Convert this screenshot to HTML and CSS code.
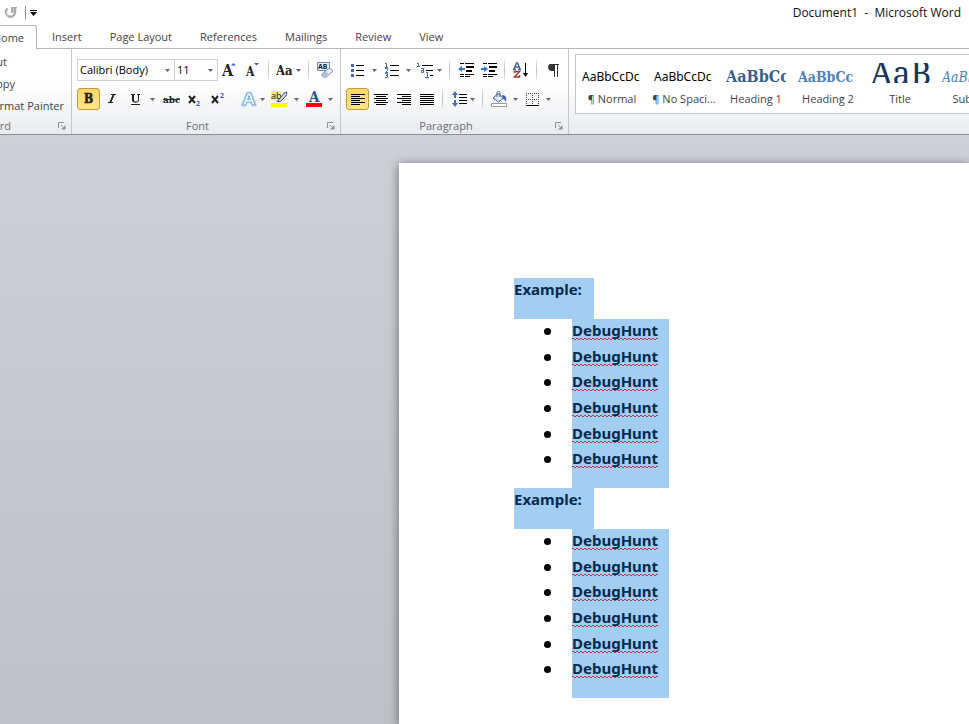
FILE: index.html
```html
<!DOCTYPE html>
<html lang="en">
<head>
    <meta charset="UTF-8">
    <meta name="viewport" content="width=device-width, initial-scale=1.0">
    <title>Document1 - Microsoft Word</title>
    <link rel="stylesheet" href="styles.css">
</head>
<body>
    <header class="titlebar">
        <div class="quick-access">
            <button type="button" class="quick" aria-label="Repeat">
                <svg width="14" height="14" viewBox="0 0 14 14"><path d="M3.500 2.500A4.600 4.600 0 1 0 11 6V2" fill="none" stroke="#a9abae" stroke-width="2.400"/><path d="M7 1h6v1.500H9.500V7H7z" fill="#a9abae"/><path d="M3 5a4 4 0 0 0 1 5" fill="none" stroke="#d6d8da"/></svg>
            </button>
            <span class="quick-sep"></span>
            <button type="button" class="quick" aria-label="Customize">
                <svg width="7" height="6" viewBox="0 0 7 6"><path d="M0 0h7v1H0zM0 2h7L3.500 6z" fill="#000"/></svg>
            </button>
        </div>
        <h1 class="title">Document1&nbsp; -&nbsp; Microsoft Word</h1>
    </header>

    <nav class="tabs">
        <button type="button" class="tab active">Home</button>
        <button type="button" class="tab">Insert</button>
        <button type="button" class="tab">Page Layout</button>
        <button type="button" class="tab">References</button>
        <button type="button" class="tab">Mailings</button>
        <button type="button" class="tab">Review</button>
        <button type="button" class="tab">View</button>
    </nav>

    <section class="ribbon">
        <div class="group clipboard">
            <div class="commands">
                <button type="button" class="command">Cut</button>
                <button type="button" class="command">Copy</button>
                <button type="button" class="command">Format Painter</button>
            </div>
            <div class="group-footer">
                <span class="group-name">Clipboard</span>
                <button type="button" class="launcher" aria-label="Clipboard options"><svg width="8" height="8" viewBox="0 0 8 8"><path d="M.5 6V.5H6M3 3l2 2" fill="none" stroke="#8d9197"/><path d="M7.500 3v4.500H3z" fill="#8d9197"/></svg></button>
            </div>
        </div>

        <div class="group font">
            <div class="tools">
                <label class="combo combo-font">
                    <select aria-label="Font"><option>Calibri (Body)</option></select>
                    <svg class="arrow" width="5" height="3" viewBox="0 0 5 3"><path d="M0 0h5L2.500 3z"/></svg>
                </label>
                <label class="combo combo-size">
                    <select aria-label="Font size"><option>11</option></select>
                    <svg class="arrow" width="5" height="3" viewBox="0 0 5 3"><path d="M0 0h5L2.500 3z"/></svg>
                </label>
                <button type="button" class="tool" aria-label="Grow font">
                    <svg width="15" height="16" viewBox="0 0 15 16"><text class="serif" x="0" y="14" font-size="16">A</text><path d="M9 3.500h5L11.500 1z" fill="#3b62ab"/></svg>
                </button>
                <button type="button" class="tool" aria-label="Shrink font">
                    <svg width="15" height="16" viewBox="0 0 15 16"><text class="serif" x="1" y="14" font-size="12">A</text><path d="M9 1h5l-2.500 2.500z" fill="#3b62ab"/></svg>
                </button>
                <span class="sep"></span>
                <button type="button" class="tool split" aria-label="Change case">
                    <svg width="17" height="16" viewBox="0 0 17 16"><text class="serif" x="0" y="13" font-size="13">Aa</text></svg>
                    <svg class="arrow" width="5" height="3" viewBox="0 0 5 3"><path d="M0 0h5L2.500 3z"/></svg>
                </button>
                <span class="sep"></span>
                <button type="button" class="tool" aria-label="Clear formatting">
                    <svg width="16" height="16" viewBox="0 0 16 16"><path d="M.5.5h12v8H.5z" fill="#e9eef8" stroke="#7089b8"/><text x="1" y="7" font-size="7" font-weight="bold">AB</text><path d="M5 12l6-5c2-1 5 0 4.500 2.500L10 14.500c-2 2-6 0-5-2.500z" fill="#eef1f7" stroke="#7485a8"/><path d="M8 9.500c2 0 3 1.500 3.500 3.500L10 14.500c-2 1.500-5.500 0-5-2.500z" fill="#b5c1da"/></svg>
                </button>
            </div>
            <div class="tools">
                <button type="button" class="tool on" aria-label="Bold"><svg width="15" height="16" viewBox="0 0 15 16"><text class="serif" x="3" y="12" font-size="12" stroke="#222" stroke-width=".5">B</text></svg></button>
                <button type="button" class="tool" aria-label="Italic"><svg width="15" height="16" viewBox="0 0 15 16"><path d="M7 3h5v1h-1.500L7.500 11H9v1H4v-1h1.500L8.500 4H7z" fill="#222"/></svg></button>
                <button type="button" class="tool split underline" aria-label="Underline">
                    <svg width="13" height="16" viewBox="0 0 13 16"><path d="M2 3h4v1H5v5c0 2 4 2 4 0V4H8V3h3v1h-1v5c0 3.500-7 3.500-7 0V4H2zM2 13h9v1H2z" fill="#222"/></svg>
                    <svg class="arrow" width="5" height="3" viewBox="0 0 5 3"><path d="M0 0h5L2.500 3z"/></svg>
                </button>
                <button type="button" class="tool" aria-label="Strikethrough"><svg width="17" height="16" viewBox="0 0 17 16"><text class="serif" x="0" y="12" font-size="10">abc</text><path d="M0 8h17v1H0z" fill="#333"/></svg></button>
                <button type="button" class="tool" aria-label="Subscript"><svg width="15" height="16" viewBox="0 0 15 16"><path d="M2 5l6 7M8 5l-6 7" stroke="#222" stroke-width="2"/><text class="blue" x="9" y="15" font-size="7">2</text></svg></button>
                <button type="button" class="tool" aria-label="Superscript"><svg width="15" height="16" viewBox="0 0 15 16"><path d="M2 5l6 7M8 5l-6 7" stroke="#222" stroke-width="2"/><text class="blue" x="10" y="7" font-size="7">2</text></svg></button>
                <span class="sep"></span>
                <button type="button" class="tool split" aria-label="Text effects">
                    <svg width="16" height="16" viewBox="0 0 16 16"><path d="M1.500 14L6.500 2h3l5 12h-3l-1-3h-5l-1 3zM6.500 8.500h3L8 4.500z" fill="#fff" stroke="#b9dcf5" stroke-width="3"/><path d="M1.500 14L6.500 2h3l5 12h-3l-1-3h-5l-1 3zM6.500 8.500h3L8 4.500z" fill="#fff" fill-rule="evenodd" stroke="#6fa4d6"/></svg>
                    <svg class="arrow" width="5" height="3" viewBox="0 0 5 3"><path d="M0 0h5L2.500 3z"/></svg>
                </button>
                <button type="button" class="tool split wide" aria-label="Highlight">
                    <svg width="17" height="16" viewBox="0 0 17 16"><path d="M0 0h10v9H0z" fill="#f5f06a"/><text x="0" y="8" font-size="9">ab</text><path d="M7 10l6-8 3-1-1 4-6 6z" fill="#cbd5e8" stroke="#4d5f82"/><path d="M5 11l2-2 2 2z" fill="#4d5f82"/><path d="M0 12h16v4H0z" fill="#ffff00"/></svg>
                    <svg class="arrow" width="5" height="3" viewBox="0 0 5 3"><path d="M0 0h5L2.500 3z"/></svg>
                </button>
                <button type="button" class="tool split wide" aria-label="Font color">
                    <svg width="16" height="16" viewBox="0 0 16 16"><text class="serif navy" x="3" y="11" font-size="15">A</text><path d="M0 12h16v4H0z" fill="#f00"/></svg>
                    <svg class="arrow" width="5" height="3" viewBox="0 0 5 3"><path d="M0 0h5L2.500 3z"/></svg>
                </button>
            </div>
            <div class="group-footer">
                <span class="group-name">Font</span>
                <button type="button" class="launcher" aria-label="Font options"><svg width="8" height="8" viewBox="0 0 8 8"><path d="M.5 6V.5H6M3 3l2 2" fill="none" stroke="#8d9197"/><path d="M7.500 3v4.500H3z" fill="#8d9197"/></svg></button>
            </div>
        </div>

        <div class="group paragraph">
            <div class="tools">
                <button type="button" class="tool split wide" aria-label="Bullets">
                    <svg width="16" height="16" viewBox="0 0 16 16"><path d="M1 2h3v3H1zM1 7h3v3H1zM1 12h3v3H1z" fill="#4568ae"/><path d="M6 3h8v1H6zM6 8h8v1H6zM6 13h8v1H6z"/></svg>
                    <svg class="arrow" width="5" height="3" viewBox="0 0 5 3"><path d="M0 0h5L2.500 3z"/></svg>
                </button>
                <button type="button" class="tool split wide" aria-label="Numbering">
                    <svg width="16" height="16" viewBox="0 0 16 16"><path d="M1 1.500h1.500V5M1 5.500h3M1 6.500h2.500v2L1.500 10.500H4M1 11.500h2.500v4H1M2 13.500h1.500" fill="none" stroke="#4568ae"/><path d="M6 3h9v1H6zM6 8h9v1H6zM6 13h9v1H6z"/></svg>
                    <svg class="arrow" width="5" height="3" viewBox="0 0 5 3"><path d="M0 0h5L2.500 3z"/></svg>
                </button>
                <button type="button" class="tool split" aria-label="Multilevel list">
                    <svg width="17" height="16" viewBox="0 0 17 16"><path d="M0 1.500h1.500V4M0 4.500h3M4 6.500h2.500v4H4.500v-2H7M9 10.500h1.500V15M8 15.500h4M10 8.500h1" fill="none" stroke="#4568ae"/><path d="M5 3h11v1H5zM9 8h7v1H9zM13 13h3v1h-3z"/></svg>
                    <svg class="arrow" width="5" height="3" viewBox="0 0 5 3"><path d="M0 0h5L2.500 3z"/></svg>
                </button>
                <span class="sep"></span>
                <button type="button" class="tool" aria-label="Decrease indent"><svg width="16" height="16" viewBox="0 0 16 16"><path d="M2 1h4v1H2zM7 1h9v1H7zM8 4h8v2H8zM8 8h6v2H8zM2 12h4v1H2zM7 12h9v1H7zM2 14h4v1H2zM7 14h5v1H7z"/><path d="M0 7l4-3v2h3v2H4v2z" fill="#3c74c8"/></svg></button>
                <button type="button" class="tool" aria-label="Increase indent"><svg width="16" height="16" viewBox="0 0 16 16"><path d="M2 1h4v1H2zM7 1h9v1H7zM8 4h8v2H8zM8 8h6v2H8zM2 12h4v1H2zM7 12h9v1H7zM2 14h4v1H2zM7 14h5v1H7z"/><path d="M7 7L3 4v2H0v2h3v2z" fill="#3c74c8"/></svg></button>
                <span class="sep"></span>
                <button type="button" class="tool" aria-label="Sort"><svg width="16" height="16" viewBox="0 0 16 16"><path d="M1 7l2.500-6h1L7 7M2 5h4M0 7.500h3M5 7.500h3" fill="none" stroke="#3b62ab" stroke-width="1.400"/><path d="M1.500 11V9.500h5L1.500 15h5v-2" fill="none" stroke="#a33a3a" stroke-width="1.500"/><path d="M12 1h1v10h2l-2.500 4L10 11h2z"/></svg></button>
                <span class="sep"></span>
                <button type="button" class="tool" aria-label="Show marks"><svg width="16" height="16" viewBox="0 0 16 16"><path d="M6 2h8v1h-1v12h-1V3h-2v12H9V9H7C2 9 2 2 6 2z" fill="#333"/></svg></button>
            </div>
            <div class="tools">
                <button type="button" class="tool on" aria-label="Align left"><svg width="15" height="16" viewBox="0 0 15 16"><path d="M1 3h14v1H1zM1 5h9v1H1zM1 7h14v1H1zM1 9h9v1H1zM1 11h14v1H1zM1 13h9v1H1z"/></svg></button>
                <button type="button" class="tool" aria-label="Center"><svg width="15" height="16" viewBox="0 0 15 16"><path d="M1 3h14v1H1zM3 5h10v1H3zM1 7h14v1H1zM3 9h10v1H3zM1 11h14v1H1zM3 13h10v1H3z"/></svg></button>
                <button type="button" class="tool" aria-label="Align right"><svg width="15" height="16" viewBox="0 0 15 16"><path d="M1 3h14v1H1zM6 5h9v1H6zM1 7h14v1H1zM6 9h9v1H6zM1 11h14v1H1zM6 13h9v1H6z"/></svg></button>
                <button type="button" class="tool" aria-label="Justify"><svg width="15" height="16" viewBox="0 0 15 16"><path d="M1 3h14v1H1zM1 5h14v1H1zM1 7h14v1H1zM1 9h14v1H1zM1 11h14v1H1zM1 13h14v1H1z"/></svg></button>
                <span class="sep"></span>
                <button type="button" class="tool split" aria-label="Line spacing">
                    <svg width="16" height="16" viewBox="0 0 16 16"><path d="M4 0l3 4H5v3H3V4H1zM4 16l3-4H5V9H3v3H1z" fill="#3c74c8"/><path d="M8 3h8v1H8zM8 6h8v1H8zM8 9h8v1H8zM8 12h8v1H8z"/></svg>
                    <svg class="arrow" width="5" height="3" viewBox="0 0 5 3"><path d="M0 0h5L2.500 3z"/></svg>
                </button>
                <span class="sep"></span>
                <button type="button" class="tool split wide" aria-label="Shading">
                    <svg width="17" height="16" viewBox="0 0 17 16"><path d="M3 7L8 2.500l5.500 4.500L8.500 11z" fill="#dfe8f5" stroke="#4c607f"/><path d="M7 6V1.500C7 0 10 0 10 1.500V6" fill="none" stroke="#4c607f"/><path d="M12 4c4 0 5 3 4 7-1-2-2-3-3-3z" fill="#3c65ad"/><path d="M1.500 12.500h15v3h-15z" fill="#fff" stroke="#9b9b9b"/></svg>
                    <svg class="arrow" width="5" height="3" viewBox="0 0 5 3"><path d="M0 0h5L2.500 3z"/></svg>
                </button>
                <button type="button" class="tool split wide" aria-label="Borders">
                    <svg width="14" height="14" viewBox="0 0 14 14"><path d="M.5 1v12M6.500 1v12M12.500 1v12M0 1.500h13M0 7.500h13" fill="none" stroke="#444" stroke-dasharray="1 1"/><path d="M0 13h13v1H0z"/></svg>
                    <svg class="arrow" width="5" height="3" viewBox="0 0 5 3"><path d="M0 0h5L2.500 3z"/></svg>
                </button>
            </div>
            <div class="group-footer">
                <span class="group-name">Paragraph</span>
                <button type="button" class="launcher" aria-label="Paragraph options"><svg width="8" height="8" viewBox="0 0 8 8"><path d="M.5 6V.5H6M3 3l2 2" fill="none" stroke="#8d9197"/><path d="M7.500 3v4.500H3z" fill="#8d9197"/></svg></button>
            </div>
        </div>

        <div class="group styles">
            <div class="gallery">
                <button type="button" class="style"><span class="sample">AaBbCcDc</span><span class="style-name">¶ Normal</span></button>
                <button type="button" class="style"><span class="sample">AaBbCcDc</span><span class="style-name">¶ No Spaci...</span></button>
                <button type="button" class="style"><span class="sample heading1">AaBbCc</span><span class="style-name">Heading 1</span></button>
                <button type="button" class="style"><span class="sample heading2">AaBbCc</span><span class="style-name">Heading 2</span></button>
                <button type="button" class="style"><span class="sample title-style">AaB</span><span class="style-name">Title</span></button>
                <button type="button" class="style"><span class="sample subtitle">AaBbCc</span><span class="style-name">Subtitle</span></button>
            </div>
        </div>
    </section>

    <main class="workspace">
        <article class="page">
            <p class="example">Example:</p>
            <ul class="names">
                <li><span class="misspelled">DebugHunt</span></li>
                <li><span class="misspelled">DebugHunt</span></li>
                <li><span class="misspelled">DebugHunt</span></li>
                <li><span class="misspelled">DebugHunt</span></li>
                <li><span class="misspelled">DebugHunt</span></li>
                <li><span class="misspelled">DebugHunt</span></li>
            </ul>
            <p class="example">Example:</p>
            <ul class="names">
                <li><span class="misspelled">DebugHunt</span></li>
                <li><span class="misspelled">DebugHunt</span></li>
                <li><span class="misspelled">DebugHunt</span></li>
                <li><span class="misspelled">DebugHunt</span></li>
                <li><span class="misspelled">DebugHunt</span></li>
                <li><span class="misspelled">DebugHunt</span></li>
            </ul>
        </article>
    </main>
</body>
</html>
```
FILE: styles.css
```css
* {
    box-sizing: border-box;
}

body {
    margin: 0;
    height: 100vh;
    display: flex;
    flex-direction: column;
    overflow: hidden;
    font-family: "Open Sans", "Noto Sans", sans-serif;
    font-size: 11px;
    line-height: 16px;
    color: #444;
    background-color: #fff;
}

button {
    margin: 0;
    padding: 0;
    border: 1px solid transparent;
    background: none;
    font: inherit;
    color: inherit;
    white-space: nowrap;
}

svg {
    display: block;
    flex: none;
}

/* title bar */
.titlebar {
    display: flex;
    justify-content: space-between;
    align-items: center;
    height: 25px;
    padding: 0 8px 0 3px;
}

.quick-access {
    display: flex;
    align-items: center;
}

.quick-sep {
    width: 1px;
    height: 13px;
    margin: 0 3px 0 6px;
    background-color: #8d9197;
}

.title {
    margin: 0;
    font-size: 12px;
    font-weight: normal;
    color: #111;
}

/* tabs */
.tabs {
    display: flex;
    height: 24px;
    border-bottom: 1px solid #b4b8be;
}

.tab {
    padding: 0 13px;
}

.tab.active {
    display: flex;
    justify-content: flex-end;
    align-items: center;
    width: 37px;
    height: 24px;
    padding-right: 12px;
    margin-right: 1px;
    border: 1px solid #b4b8be;
    border-width: 1px 1px 0 0;
    border-radius: 0 3px 0 0;
    background-color: #fff;
}

/* ribbon */
.ribbon {
    display: flex;
    height: 86px;
    background: linear-gradient(#fff 40%, #e9ebee);
    border-bottom: 1px solid #8b9097;
}

.group {
    display: flex;
    flex-direction: column;
    flex: none;
    padding: 10px 4px 0;
    border-right: 1px solid #c3c6ca;
}

.clipboard {
    width: 72px;
    padding-top: 2px;
    overflow: hidden;
}

.font {
    width: 269px;
    padding-left: 5px;
}

.paragraph {
    width: 228px;
    padding-left: 5px;
}

.commands {
    display: flex;
    flex-direction: column;
    align-items: flex-end;
    padding-right: 2px;
}

.command {
    height: 22px;
}

.clipboard .command:nth-child(1) {
    margin-right: 57px;
}

.clipboard .command:nth-child(2) {
    margin-right: 49px;
}

.group-footer {
    display: flex;
    align-items: center;
    justify-content: space-between;
    height: 18px;
    margin-top: auto;
    color: #6b6f7e;
}

.clipboard .group-footer {
    justify-content: flex-end;
    gap: 46px;
}

.group-name {
    flex: 1;
    padding-right: 8px;
    text-align: center;
}

.clipboard .group-name {
    flex: none;
    padding-right: 0;
}

.tools {
    display: flex;
    align-items: center;
    height: 22px;
    margin-bottom: 7px;
}

.tools + .group-footer {
    margin-top: 0;
}

.tool {
    display: flex;
    align-items: center;
    justify-content: center;
    gap: 3px;
    flex: none;
    width: 23px;
    height: 22px;
}

.tool.split {
    width: 31px;
}

.tool.split.wide {
    width: 34px;
    gap: 6px;
}

.tool.split.underline {
    width: 37px;
    gap: 8px;
}

.tool.on {
    border-color: #c29b3d;
    border-radius: 3px;
    background: linear-gradient(#fbd76d, #ffe683);
}

.tool text {
    font-family: "Noto Sans", sans-serif;
    fill: #222;
}

.tool .serif {
    font-family: "DejaVu Serif Condensed", "DejaVu Serif", serif;
    font-weight: bold;
}

.tool .navy {
    fill: #2c4f8c;
}

.tool .blue {
    fill: #3b62ab;
    font-weight: bold;
}

.arrow {
    fill: #666;
}

.sep {
    width: 1px;
    height: 20px;
    margin: 0 4px;
    background: linear-gradient(#e6e8ea, #b9bcc1, #e6e8ea);
}

.combo {
    display: flex;
    align-items: center;
    height: 22px;
    padding-right: 4px;
    border: 1px solid #cfd1d4;
    background-color: #fff;
}

.combo select {
    flex: 1;
    min-width: 0;
    appearance: none;
    border: 0;
    padding: 0 0 0 2px;
    background: none;
    font: inherit;
    color: #000;
}

.combo-font {
    width: 98px;
}

.combo-size {
    width: 43px;
    border-left: 0;
}

.launcher {
    width: 10px;
    height: 10px;
}

/* style gallery */
.styles {
    flex: 1;
    min-width: 0;
    padding: 5px 0 0 6px;
    border-right: 0;
}

.gallery {
    display: flex;
    height: 60px;
    border: 1px solid #c3c6ca;
    border-right: 0;
    background-color: #fff;
    overflow: hidden;
}

.style {
    display: flex;
    flex-direction: column;
    align-items: center;
    flex: none;
    width: 72px;
    padding: 7px 5px 0;
}

.sample {
    display: flex;
    align-items: center;
    width: 60px;
    height: 28px;
    overflow: hidden;
    font-family: "Noto Sans", sans-serif;
    font-size: 12px;
    color: #000;
}

.heading1,
.heading2,
.subtitle {
    font-family: "DejaVu Serif Condensed", "DejaVu Serif", serif;
    font-size: 16px;
    font-weight: bold;
    color: #365f91;
}

.heading2 {
    font-size: 14px;
    color: #4f81bd;
}

.subtitle {
    font-weight: normal;
    font-style: italic;
    font-size: 14px;
    color: #4f81bd;
}

/* taller than its box, so the top of the capitals is cut */
.title-style {
    font-family: "Noto Serif", "Liberation Serif", serif;
    font-size: 32px;
    height: 20px;
    margin-bottom: 8px;
    color: #17365d;
}

/* document */
.workspace {
    flex: 1;
    display: flex;
    min-height: 0;
    padding: 28px 0 0 399px;
    overflow: hidden;
    background: linear-gradient(#cdd0d5, #bec1c6);
}

.page {
    flex: 1;
    padding: 115px 0 0 115px;
    background-color: #fff;
    box-shadow: 0 2px 10px rgba(0, 0, 0, 0.5);
    font-family: "Noto Sans", sans-serif;
    font-size: 15px;
    font-weight: bold;
    line-height: 22px;
    color: #032a50;
}

.example {
    width: 80px;
    height: 41px;
    margin: 0;
    background-color: #a3cdf1;
}

.names {
    display: grid;
    grid-auto-rows: 1fr;
    width: 97px;
    height: 169px;
    margin: 0 0 0 58px;
    padding: 0 0 15px;
    list-style: none;
    background-color: #a3cdf1;
}

.names li {
    display: flex;
    align-items: flex-start;
}

.names li::before {
    content: "";
    flex: none;
    width: 7px;
    height: 7px;
    margin: 9px 21px 0 -28px;
    border-radius: 50%;
    background-color: #000;
}

/* two offset rows of dashes make the squiggle */
.misspelled {
    height: 22px;
    background:
        repeating-linear-gradient(90deg, #c0304f 0 2px, transparent 2px 4px) 0 19px / 100% 1px no-repeat,
        repeating-linear-gradient(90deg, transparent 0 2px, #c0304f 2px 4px) 0 20px / 100% 1px no-repeat;
}
```
